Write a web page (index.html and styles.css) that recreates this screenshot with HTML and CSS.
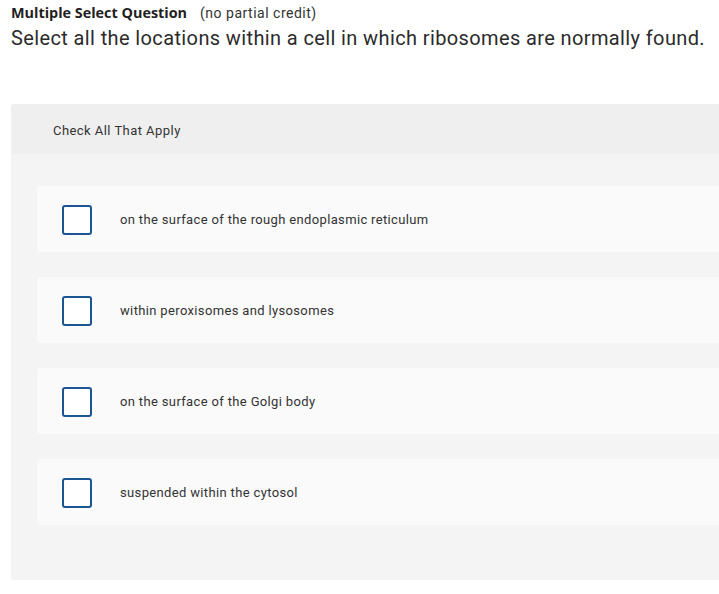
FILE: index.html
```html
<!DOCTYPE html>
<html>
<head>
<meta charset="utf-8">
<link rel="stylesheet" href="styles.css">
</head>
<body>
<div class="page">
  <div class="meta"><span class="qtype">Multiple Select Question</span><span class="credit">(no partial credit)</span></div>
  <div class="prompt">Select all the locations within a cell in which ribosomes are normally found.</div>
  <div class="panel">
    <div class="panel-head">Check All That Apply</div>
    <div class="panel-body">
      <label class="option"><span class="box"></span><span class="opt-text">on the surface of the rough endoplasmic reticulum</span></label>
      <label class="option"><span class="box"></span><span class="opt-text">within peroxisomes and lysosomes</span></label>
      <label class="option"><span class="box"></span><span class="opt-text">on the surface of the Golgi body</span></label>
      <label class="option"><span class="box"></span><span class="opt-text">suspended within the cytosol</span></label>
    </div>
  </div>
</div>
</body>
</html>
```

FILE: styles.css
```css
html, body {
  margin: 0;
  padding: 0;
  background: #fff;
  overflow: hidden;
}
body {
  font-family: "Roboto", "Open Sans", sans-serif;
  color: #2b2b2b;
}
.page {
  padding: 4px 0 0 11px;
}
.meta {
  font-size: 14px;
  line-height: 18px;
}
.qtype {
  font-family: "Open Sans", "Roboto", sans-serif;
  font-weight: 700;
  font-size: 14.4px;
  color: #1f1f1f;
}
.credit {
  margin-left: 13px;
  letter-spacing: 0.5px;
  color: #333;
}
.prompt {
  font-size: 20px;
  line-height: 26px;
  margin-top: 3px;
  letter-spacing: 0.38px;
  color: #2b2b2b;
}
.panel {
  margin-top: 53px;
  width: 720px;
  background: #f4f4f4;
  border-radius: 3px;
  overflow: hidden;
}
.panel-head {
  background: #efefef;
  height: 50px;
  box-sizing: border-box;
  padding-top: 2px;
  display: flex;
  align-items: center;
  padding-left: 42px;
  font-size: 13px;
  letter-spacing: 0.45px;
  color: #333;
}
.panel-body {
  padding: 32px 0 55px 26px;
  display: flex;
  flex-direction: column;
  gap: 25px;
}
.option {
  background: #fafafa;
  height: 66px;
  box-sizing: border-box;
  padding-top: 1px;
  display: flex;
  align-items: center;
  padding-left: 25px;
  border-radius: 3px 0 0 3px;
  font-size: 13px;
  letter-spacing: 0.35px;
  color: #333;
}
.box {
  width: 26px;
  height: 26px;
  border: 2px solid #1b5592;
  border-radius: 3px;
  background: #fff;
  flex: none;
}
.opt-text {
  margin-left: 28px;
}
```
